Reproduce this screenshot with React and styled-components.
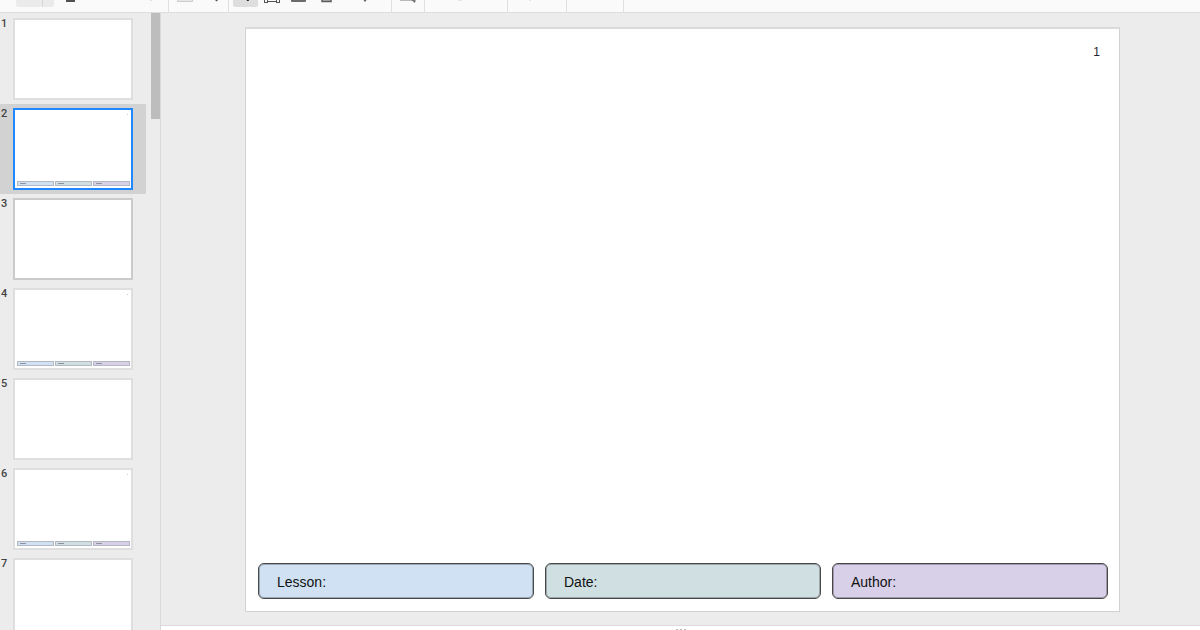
import React, { useState } from "react";
import styled, { createGlobalStyle } from "styled-components";

const fields = [
  { label: "Lesson:", color: "#cfe1f2" },
  { label: "Date:", color: "#d0dfe1" },
  { label: "Author:", color: "#d8cfe8" },
];

const slides = [
  { id: 1, filled: false },
  { id: 2, filled: true },
  { id: 3, filled: false, strong: true },
  { id: 4, filled: true },
  { id: 5, filled: false },
  { id: 6, filled: true },
  { id: 7, filled: false },
];

function Toolbar() {
  return (
    <Bar role="toolbar" aria-label="Slide tools">
      <Group $width={169} $start={16} $gap={8}>
        <Split>
          <Tool $width={26} $fill="#ebebeb" aria-label="New slide" />
          <Tool $width={12} $fill="#ebebeb" $line aria-label="New slide with layout" />
        </Split>
        <Tool $width={16} aria-label="Print">
          <svg width="16" height="26" viewBox="0 0 16 26">
            <path d="M5 14h7v6h-7z" fill="none" stroke="#505050" strokeWidth="2" />
          </svg>
        </Tool>
        <Spacer />
        <Tool $width={16} aria-label="Paint format">
          <svg width="16" height="26" viewBox="0 0 16 26">
            <path d="M5 9h7v5h-5v6" fill="none" stroke="#c4c4c4" />
          </svg>
        </Tool>
      </Group>
      <Group $width={60} $start={8} $gap={16}>
        <Tool $width={16} aria-label="Fit">
          <svg width="16" height="26" viewBox="0 0 16 26">
            <path d="M0.5 9h15v11.5h-15z" fill="#e6e6e6" stroke="#cdcdcd" />
          </svg>
        </Tool>
        <Tool $width={16} aria-label="Zoom">
          <svg width="16" height="26" viewBox="0 0 16 26">
            <circle cx="3" cy="11" r="4" fill="none" stroke="#555" strokeWidth="2" />
            <path d="M5 15l3 5" stroke="#555" strokeWidth="2" />
          </svg>
        </Tool>
      </Group>
      <Group $width={163} $start={4} $gap={3}>
        <Tool $width={25} $fill="#dedede" aria-label="Select">
          <svg width="25" height="26" viewBox="0 0 25 26">
            <path d="M9 5v12l3-3 2 6h2l-2-6h4z" fill="#222" />
          </svg>
        </Tool>
        <Tool $width={25} aria-label="Text box">
          <svg width="25" height="26" viewBox="0 0 25 26">
            <path d="M5 8v12.5h12v-12.5z" fill="none" stroke="#555" />
            <path d="M3 18h4v4h-4zM15 18h4v4h-4z" fill="#555" />
            <path d="M4 19h2v2h-2zM16 19h2v2h-2z" fill="#fafafa" />
          </svg>
        </Tool>
        <Tool $width={25} aria-label="Image">
          <svg width="25" height="26" viewBox="0 0 25 26">
            <rect x="2" y="7" width="15" height="14" rx="1" fill="#6b6b6b" />
          </svg>
        </Tool>
        <Tool $width={25} aria-label="Shape">
          <svg width="25" height="26" viewBox="0 0 25 26">
            <path d="M5 10h9v10.5h-9z" fill="#b4b4b4" stroke="#5d5d5d" strokeWidth="1.5" />
          </svg>
        </Tool>
        <Tool $width={30} aria-label="Line">
          <svg width="30" height="26" viewBox="0 0 30 26">
            <path d="M17 17h6l-3 4z" fill="#5d5d5d" />
          </svg>
        </Tool>
      </Group>
      <Group $width={33} $start={7} $gap={0}>
        <Tool $width={18} aria-label="Comment">
          <svg width="18" height="26" viewBox="0 0 18 26">
            <path d="M1 7h15v14l-3-2h-12z" fill="none" stroke="#777" />
            <path d="M11 18h5v4z" fill="#777" />
          </svg>
        </Tool>
      </Group>
      <Group $width={83} $start={27} $gap={0}>
        <Tool $width={16} aria-label="Background">
          <svg width="16" height="26" viewBox="0 0 16 26">
            <path d="M8 14v6" stroke="#e2e2e2" strokeWidth="3" />
          </svg>
        </Tool>
      </Group>
      <Group $width={59} $start={14} $gap={0}>
        <Tool $width={16} aria-label="Layout">
          <svg width="16" height="26" viewBox="0 0 16 26">
            <path d="M8 14v6" stroke="#e6e6e6" strokeWidth="2" />
          </svg>
        </Tool>
      </Group>
      <Group $width={57} $start={0} $gap={0} />
    </Bar>
  );
}

export default function App() {
  const [current, setCurrent] = useState(2);

  return (
    <>
      <GlobalStyle />
      <Page>
        <Toolbar />
        <Body>
          <Filmstrip>
            <SlideList>
              {slides.map((slide) => (
                <SlideRow key={slide.id} $selected={slide.id === current}>
                  <SlideNumber>{slide.id}</SlideNumber>
                  <Thumb
                    type="button"
                    aria-label={`Slide ${slide.id}`}
                    $selected={slide.id === current}
                    $strong={slide.strong}
                    onClick={() => setCurrent(slide.id)}
                  >
                    {slide.filled && <MiniPage />}
                    {slide.filled &&
                      fields.map((field) => (
                        <MiniField key={field.label} $color={field.color}>
                          <MiniLine />
                        </MiniField>
                      ))}
                  </Thumb>
                </SlideRow>
              ))}
            </SlideList>
            <ScrollTrack>
              <ScrollThumb />
            </ScrollTrack>
          </Filmstrip>
          <Main>
            <Workspace>
              <Slide>
                <PageNumber>1</PageNumber>
                <Fields>
                  {fields.map((field) => (
                    <Field key={field.label} $color={field.color}>
                      {field.label}
                    </Field>
                  ))}
                </Fields>
              </Slide>
            </Workspace>
            <Notes>
              <Dot />
              <Dot />
              <Dot />
            </Notes>
          </Main>
        </Body>
      </Page>
    </>
  );
}

const GlobalStyle = createGlobalStyle`
  * {
    box-sizing: border-box;
  }
  body {
    margin: 0;
    font-family: "Liberation Sans", Arial, sans-serif;
    background: #ececec;
  }
  button {
    border: none;
    padding: 0;
    background: none;
    cursor: pointer;
  }
`;

const Page = styled.div`
  display: flex;
  flex-direction: column;
  height: 100vh;
  overflow: hidden;
`;

const Bar = styled.div`
  display: flex;
  flex: none;
  height: 13px;
  overflow: hidden;
  background: #fafafa;
  border-bottom: 1px solid #dedede;
`;

const Group = styled.div`
  display: flex;
  flex: none;
  align-items: flex-end;
  gap: ${(p) => p.$gap}px;
  width: ${(p) => p.$width}px;
  padding: 0 8px 5px ${(p) => p.$start}px;
  border-right: 1px solid #e0e0e0;
`;

const Split = styled.div`
  display: flex;
`;

const Spacer = styled.div`
  flex: 1;
`;

const Tool = styled.button`
  flex: none;
  width: ${(p) => p.$width}px;
  height: 26px;
  background: ${(p) => p.$fill || "transparent"};
  border-left: ${(p) => (p.$line ? "1px solid #d6d6d6" : "none")};
  border-radius: ${(p) => (p.$line ? "0 2px 2px 0" : "2px")};
  svg {
    display: block;
  }
`;

const Body = styled.div`
  display: flex;
  flex: 1;
  min-height: 0;
`;

const Filmstrip = styled.nav`
  display: flex;
  flex: none;
  width: 161px;
  border-right: 1px solid #dadada;
  overflow: hidden;
`;

const SlideList = styled.ol`
  flex: 1;
  margin: 0;
  padding: 1px 0 0;
  list-style: none;
`;

const SlideRow = styled.li`
  display: flex;
  align-items: flex-start;
  width: 146px;
  height: 90px;
  padding-top: 4px;
  background: ${(p) => (p.$selected ? "#d2d2d2" : "transparent")};
`;

const SlideNumber = styled.span`
  width: 13px;
  padding-left: 1px;
  font-family: Roboto, sans-serif;
  font-size: 11px;
  font-weight: 500;
  line-height: 11px;
  color: #444;
`;

const Thumb = styled.button`
  position: relative;
  display: flex;
  align-items: flex-end;
  gap: 1px;
  width: 120px;
  height: 82px;
  && {
    padding: 0 1px 2px 2px;
    background: #fff;
    border: 2px solid
      ${(p) => (p.$selected ? "#1f87ff" : p.$strong ? "#cbcbcb" : "#dedede")};
  }
`;

const MiniPage = styled.span`
  position: absolute;
  top: 4px;
  right: 3px;
  width: 1px;
  height: 1px;
  background: #ccc;
`;

const MiniField = styled.span`
  display: flex;
  flex: 1;
  align-items: center;
  height: 5px;
  padding-left: 2px;
  background: ${(p) => p.$color};
  border: 1px solid #b4b8c2;
`;

const MiniLine = styled.span`
  width: 6px;
  height: 1px;
  background: #8d939c;
`;

const ScrollTrack = styled.div`
  width: 9px;
`;

const ScrollThumb = styled.div`
  height: 106px;
  background: #bdbdbd;
`;

const Main = styled.main`
  display: flex;
  flex: 1;
  flex-direction: column;
  min-width: 0;
`;

const Workspace = styled.section`
  display: flex;
  flex: 1;
  padding: 14px 80px 13px 84px;
`;

const Slide = styled.article`
  display: flex;
  flex: 1;
  flex-direction: column;
  justify-content: space-between;
  padding: 16px 11px 12px 12px;
  background: #fff;
  border: 1px solid #d2d2d2;
  border-top: 2px solid #dadada;
`;

const PageNumber = styled.span`
  align-self: flex-end;
  padding-right: 8px;
  font-size: 12px;
  line-height: 14px;
  color: #1c2733;
`;

const Fields = styled.div`
  display: flex;
  gap: 11px;
`;

const Field = styled.div`
  flex: 1;
  height: 36px;
  padding-left: 18px;
  font-size: 14px;
  line-height: 36px;
  color: #111;
  background: ${(p) => p.$color};
  border: 1px solid #484848;
  border-radius: 6px;
  box-shadow: inset 0 0 0 1px rgba(0, 0, 0, 0.25);
`;

const Notes = styled.footer`
  display: flex;
  flex: none;
  justify-content: center;
  gap: 2px;
  height: 5px;
  padding-top: 3px;
  background: #fff;
  border-top: 1px solid #dcdcdc;
`;

const Dot = styled.span`
  width: 2px;
  height: 1px;
  background: #bbb;
`;
